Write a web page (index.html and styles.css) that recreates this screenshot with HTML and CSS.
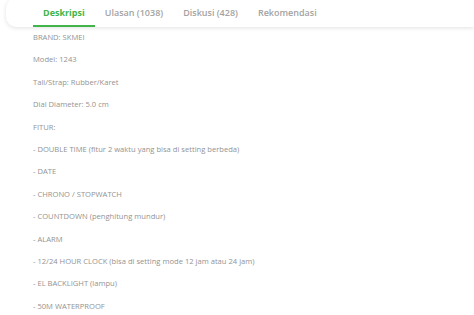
FILE: index.html
```html
<!DOCTYPE html>
<html lang="id">
<head>
    <meta charset="UTF-8">
    <meta name="viewport" content="width=device-width, initial-scale=1.0">
    <title>Deskripsi Produk</title>
    <link rel="stylesheet" href="styles.css">
</head>
<body>
    <nav class="tabs">
        <a class="tab tab--active" href="#">Deskripsi</a>
        <a class="tab" href="#">Ulasan (1038)</a>
        <a class="tab" href="#">Diskusi (428)</a>
        <a class="tab" href="#">Rekomendasi</a>
    </nav>
    <div class="desc">
        <p>BRAND: SKMEI</p>
        <p>Model: 1243</p>
        <p>Tali/Strap: Rubber/Karet</p>
        <p>Dial Diameter: 5.0 cm</p>
        <p>FITUR:</p>
        <p>- DOUBLE TIME (fitur 2 waktu yang bisa di setting berbeda)</p>
        <p>- DATE</p>
        <p>- CHRONO / STOPWATCH</p>
        <p>- COUNTDOWN (penghitung mundur)</p>
        <p>- ALARM</p>
        <p>- 12/24 HOUR CLOCK (bisa di setting mode 12 jam atau 24 jam)</p>
        <p>- EL BACKLIGHT (lampu)</p>
        <p>- 50M WATERPROOF</p>
    </div>
</body>
</html>
```

FILE: styles.css
```css
body {
    margin: 0;
    background: #fff;
    font-family: "Open Sans", "Noto Sans", sans-serif;
    overflow: hidden;
}

.tabs {
    display: flex;
    margin: -2px 0 0 6px;
    padding: 0 0 0 27px;
    height: 29px;
    border-radius: 10px 0 0 10px;
    background: #fff;
    box-shadow: 0 1px 4px rgba(0, 0, 0, .12);
}

.tab {
    display: flex;
    align-items: center;
    padding: 2px 10px 0;
    border-bottom: 2px solid transparent;
    color: #a3a3a3;
    font-size: 9px;
    font-weight: 600;
    text-decoration: none;
}

.tab--active {
    border-bottom-color: #42b549;
    color: #42b549;
    font-weight: 700;
}

.desc {
    padding: 0 0 0 33px;
    color: #939393;
    font-size: 7.6px;
    line-height: 11.2px;
}

.desc p {
    margin: 0 0 11.2px;
}

.desc p:first-child {
    margin-top: 5px;
}
```
